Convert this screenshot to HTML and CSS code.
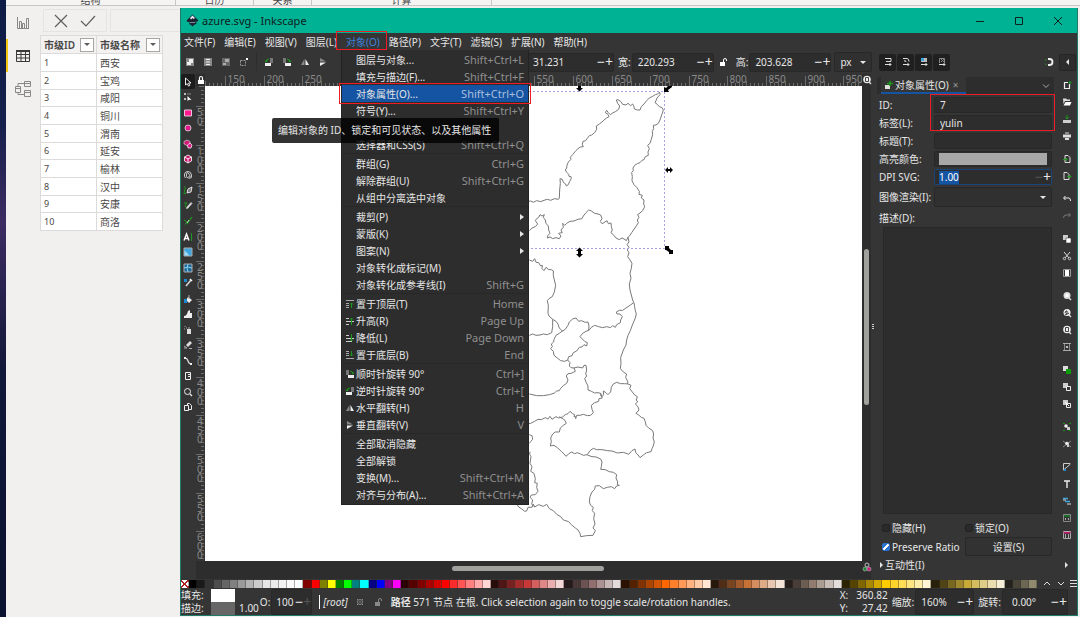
FILE: index.html
```html
<!DOCTYPE html>
<html lang="zh-CN">
<head>
    <meta charset="UTF-8">
    <meta name="viewport" content="width=device-width, initial-scale=1.0">
    <title>azure.svg - Inkscape</title>
    <link rel="stylesheet" href="styles.css">
</head>
<body>
    <!-- icon set -->
    <svg class="icon-set" aria-hidden="true">
        <symbol id="i-layers" viewBox="0 0 10 10"><path d="M1 1h8v8H1z" fill="#888"/><path d="M4 2h4v4H4zM2 5h4v3H2z" fill="#eee"/></symbol>
        <symbol id="i-list" viewBox="0 0 10 10"><path d="M1 1h8v8H1z" fill="#888"/><path d="M3 2.500h4M3 5h4M3 7.500h4" stroke="#eee"/></symbol>
        <symbol id="i-desel" viewBox="0 0 10 10"><path d="M1 1h8v8H1z" fill="#666"/><path d="M4 2h4v3H4zM2 6h3v2H2z" fill="#aaa"/></symbol>
        <symbol id="i-touch" viewBox="0 0 10 10"><path d="M1.500 3.500h5v5h-5z" fill="none" stroke="#999" stroke-dasharray="2 1"/><path d="M7 1h2v2H7z" fill="#fff"/></symbol>
        <symbol id="i-ccw" viewBox="0 0 10 10"><path d="M6 1h3v5H6z" fill="#777"/><path d="M1 6h6v3H1z" fill="#eee"/><path d="M5 2Q2 2 2 5M1 3.500l1 1.500 1.500-1" fill="none" stroke="#1a9a1a"/></symbol>
        <symbol id="i-cw" viewBox="0 0 10 10"><path d="M1 1h3v5H1z" fill="#777"/><path d="M3 6h6v3H3z" fill="#eee"/><path d="M5 2Q8 2 8 5M6.500 4L8 5l1-1.500" fill="none" stroke="#1a9a1a"/></symbol>
        <symbol id="i-fliph" viewBox="0 0 10 10"><path d="M4.500 2v6H1z" fill="#888"/><path d="M5.500 2v6H9z" fill="#eee"/></symbol>
        <symbol id="i-flipv" viewBox="0 0 10 10"><path d="M2 4.500h6L2 1z" fill="#888"/><path d="M2 5.500h6L2 9z" fill="#eee"/></symbol>
        <symbol id="i-top" viewBox="0 0 10 10"><path d="M1 1.500h8M1 4.500h3M1 6.500h3M1 8.500h3" stroke="#aaa"/><path d="M6.500 9V4M5 5.500L6.500 4 8 5.500" stroke="#1a9a1a" fill="none"/></symbol>
        <symbol id="i-raise" viewBox="0 0 10 10"><path d="M1 2.500h3M1 5.500h8M1 8.500h3" stroke="#ccc"/><path d="M6.500 9V2M5 3.500L6.500 2 8 3.500" stroke="#1a9a1a" fill="none"/></symbol>
        <symbol id="i-lower" viewBox="0 0 10 10"><path d="M1 2.500h3M1 5.500h8M1 8.500h6" stroke="#ccc"/><path d="M6.500 1v7M5 6.500L6.500 8 8 6.500" stroke="#1a9a1a" fill="none"/></symbol>
        <symbol id="i-bottom" viewBox="0 0 10 10"><path d="M1 8.500h8M1 1.500h3M1 3.500h3M1 5.500h3" stroke="#aaa"/><path d="M6.500 1v5M5 4.500L6.500 6 8 4.500" stroke="#1a9a1a" fill="none"/></symbol>
        <symbol id="i-lock" viewBox="0 0 10 10"><path d="M2 5h6v4H2z" fill="#fff"/><path d="M3.500 5V3a1.500 1.500 0 0 1 3 0v2" fill="none" stroke="#fff" stroke-width="1.200"/></symbol>
        <symbol id="i-unlock" viewBox="0 0 10 10"><path d="M2 5h5v4H2z" fill="currentColor"/><path d="M5.500 5V3a1.500 1.500 0 0 1 3 0v1" fill="none" stroke="currentColor"/></symbol>
        <symbol id="i-select" viewBox="0 0 10 10"><path d="M2.500 1l5.500 5H5.500l1.300 2.500-1.300.6L4.200 6.600 2.500 8z" fill="#111" stroke="#fff" stroke-width=".9"/></symbol>
        <symbol id="i-node" viewBox="0 0 10 10"><path d="M1 1h2v2H1zM1 6h2v2H1z" fill="#bbb"/><path d="M4 2h4" stroke="#888"/><path d="M4.500 4l4 4-2.500-.2L4.500 9z" fill="#fff"/></symbol>
        <symbol id="i-rect" viewBox="0 0 10 10"><path d="M1.500 2h7v6h-7z" fill="#ff1890" stroke="#e8c8d8"/></symbol>
        <symbol id="i-ellipse" viewBox="0 0 10 10"><circle cx="5" cy="5" r="3" fill="#e0188a" stroke="#d8b8c8"/></symbol>
        <symbol id="i-star" viewBox="0 0 10 10"><path d="M4 1l3 1.500V5L4 6.500 1 5V2.500z" fill="#d01878" stroke="#ccc" stroke-width=".7"/><path d="M7 4l2 2-1 3H5L4.500 6z" fill="#e0188a" stroke="#fff" stroke-width=".7"/></symbol>
        <symbol id="i-cube" viewBox="0 0 10 10"><path d="M5 1l3.500 2v4L5 9 1.500 7V3z" fill="#c8186e" stroke="#eee" stroke-width=".9"/><path d="M1.500 3L5 5l3.500-2M5 5v4" stroke="#fff" fill="none" stroke-width=".9"/></symbol>
        <symbol id="i-spiral" viewBox="0 0 10 10"><path d="M2.500 8Q1 6.500 1.500 4T5 1.500 8.500 5 7 8.200 4 7.500 3.600 4 6.300 4.500 5.500 6.500" fill="none" stroke="#ddd" stroke-width=".9"/></symbol>
        <symbol id="i-pen" viewBox="0 0 10 10"><path d="M1 1.500q2 0 1 3t-1 4h2" fill="none" stroke="#1a9a1a"/><path d="M9 2L5 4 4 8l4-1z" fill="#777" stroke="#eee" stroke-width=".9"/></symbol>
        <symbol id="i-pencil" viewBox="0 0 10 10"><path d="M1 2h3L2 5l3 3" fill="none" stroke="#1a9a1a"/><path d="M9 2.500L5 7l-1.500.5.500-1.500L8 1.500z" fill="#ddd" stroke="#ddd" stroke-width=".6"/></symbol>
        <symbol id="i-brush" viewBox="0 0 10 10"><path d="M1 4l3 2-2 2.500" fill="none" stroke="#1a9a1a"/><path d="M9 1L4 8" stroke="#1aa01a" stroke-width="1.200"/><path d="M6 4L4 7" stroke="#ccc"/></symbol>
        <symbol id="i-text" viewBox="0 0 10 10"><path d="M1 8.500L3.500 2l2.500 6.500M2 6.500h3" fill="none" stroke="#fff" stroke-width="1.400"/><path d="M8.500 1v8" stroke="#1a9a1a"/></symbol>
        <symbol id="i-gradient" viewBox="0 0 10 10"><path d="M1 1h8v8H1z" fill="#3fa7e0" stroke="#aaa"/><path d="M1.500 8.500v-5l5 5z" fill="#a8dcf8"/></symbol>
        <symbol id="i-mesh" viewBox="0 0 10 10"><path d="M1 1h8v8H1z" fill="#1c6a9a" stroke="#aaa"/><path d="M5 1q-2 4 0 8M1 5q4-2 8 0" stroke="#8fd0f0" fill="none"/></symbol>
        <symbol id="i-dropper" viewBox="0 0 10 10"><path d="M3 8l5-6" stroke="#ccc" stroke-width="1.800"/><path d="M1 1h3v3H1z" fill="#1c8ad0"/><path d="M7 1l2 2" stroke="#fff" stroke-width="1.500"/></symbol>
        <symbol id="i-bucket" viewBox="0 0 10 10"><path d="M5 3l4 3-3 3-3-3z" fill="#eee"/><path d="M1 5h3v4H1z" fill="#1c8ad0"/><path d="M6 1v4" stroke="#aaa"/></symbol>
        <symbol id="i-tweak" viewBox="0 0 10 10"><path d="M1 9V7q3 0 4-5l2-1v3h2v5z" fill="#eee"/></symbol>
        <symbol id="i-spray" viewBox="0 0 10 10"><path d="M4 4h4v5H4z" fill="#ddd"/><path d="M5 3h2M1.500 1.500h1M3 3h1M1 4h1" stroke="#aaa"/></symbol>
        <symbol id="i-eraser" viewBox="0 0 10 10"><path d="M7 1l2 2-4 4-2-2z" fill="#ddd"/><path d="M1 6l3 2H1M6 8.500h3" stroke="#aaa" fill="none"/></symbol>
        <symbol id="i-connector" viewBox="0 0 10 10"><path d="M2 2l2 1 2 4 2 1" stroke="#ddd" fill="none" stroke-width="1.300"/><path d="M1 1h2v2H1zM7 7h2v2H7z" fill="#eee"/></symbol>
        <symbol id="i-measure" viewBox="0 0 10 10"><path d="M2.500 1.500h5v7h-5z" fill="none" stroke="#eee"/><path d="M5 3.500h2M5 5.500h2" stroke="#eee"/></symbol>
        <symbol id="i-zoom" viewBox="0 0 10 10"><circle cx="4.500" cy="4.500" r="3" fill="none" stroke="#eee"/><path d="M7 7l2 2" stroke="#eee" stroke-width="1.300"/></symbol>
        <symbol id="i-pages" viewBox="0 0 10 10"><path d="M1.500 3.500h4v5h-4zM4.500 3V1.500h2l2 2v4H6" fill="none" stroke="#eee"/></symbol>
        <symbol id="i-new" viewBox="0 0 10 10"><path d="M6 2.500H2.500v6h5V4" fill="none" stroke="#eee" stroke-width="1.200"/><path d="M8 1v3M6.500 2.500h3" stroke="#1a9a1a"/></symbol>
        <symbol id="i-open" viewBox="0 0 10 10"><path d="M1 1.500h3l1 1h3V4H3L1.500 7z" fill="#ddd"/><path d="M3.500 5H9.500L8 8.500H1.500z" fill="#fff"/></symbol>
        <symbol id="i-save" viewBox="0 0 10 10"><path d="M1 6h8v3H1z" fill="#ccc"/><path d="M5 1v4M3.500 3.500L5 5l1.500-1.500" stroke="#1a9a1a" fill="none"/></symbol>
        <symbol id="i-print" viewBox="0 0 10 10"><path d="M3 1.500h4v1H3zM1 3.500h8v3H1zM3 7h4v2H3z" fill="#ddd"/></symbol>
        <symbol id="i-import" viewBox="0 0 10 10"><path d="M3 1.500h3l2 2v5H3z" fill="none" stroke="#ddd"/><path d="M1 5.500h4M4 4l1.500 1.500L4 7" stroke="#1a9a1a" fill="none"/></symbol>
        <symbol id="i-export" viewBox="0 0 10 10"><path d="M2 1.500h3l2 2v5H2z" fill="none" stroke="#ddd"/><path d="M5 5.500h4M7.500 4L9 5.500 7.500 7" stroke="#1a9a1a" fill="none"/></symbol>
        <symbol id="i-undo" viewBox="0 0 10 10"><path d="M3.500 2L1.500 4l2 2M2 4h5q1.500 0 1.500 3" fill="none" stroke="#eee"/></symbol>
        <symbol id="i-redo" viewBox="0 0 10 10"><path d="M6.500 2l2 2-2 2M8 4H4Q1.500 4 1.500 7" fill="none" stroke="#777"/></symbol>
        <symbol id="i-copy" viewBox="0 0 10 10"><path d="M1 1h5v5H1z" fill="#ccc"/><path d="M4 4h5v5H4z" fill="#fff" stroke="#353535" stroke-width=".6"/></symbol>
        <symbol id="i-cut" viewBox="0 0 10 10"><path d="M2 1l5 6M8 1L3 7" stroke="#ddd"/><circle cx="2.500" cy="7.500" r="1.200" fill="none" stroke="#ccc"/><circle cx="7.500" cy="7.500" r="1.200" fill="none" stroke="#ccc"/></symbol>
        <symbol id="i-paste" viewBox="0 0 10 10"><path d="M1.500 1.500h7v7h-7z" fill="none" stroke="#999"/><path d="M3 2h4v6H3z" fill="#fff"/></symbol>
        <symbol id="i-zsel" viewBox="0 0 10 10"><circle cx="5" cy="4.500" r="3.500" fill="#ddd"/><path d="M3.500 3h3v3h-3z" fill="#fff"/><path d="M7 7l2 2" stroke="#ddd" stroke-width="1.500"/></symbol>
        <symbol id="i-zdraw" viewBox="0 0 10 10"><circle cx="5" cy="4.500" r="3.500" fill="#eee"/><path d="M3 5q1-3 2-2t-1 3 3-1" stroke="#333" fill="none"/><path d="M7 7l2 2" stroke="#ddd" stroke-width="1.500"/></symbol>
        <symbol id="i-zpage" viewBox="0 0 10 10"><circle cx="5" cy="4.500" r="3.800" fill="#eee"/><path d="M3.500 2.500h3v4h-3z" fill="none" stroke="#444"/><path d="M7 7l2 2" stroke="#ddd" stroke-width="1.500"/></symbol>
        <symbol id="i-zcenter" viewBox="0 0 10 10"><path d="M1 1.500h8M1 8.500h8" stroke="#aaa"/><path d="M2.500 2v6M7.500 2v6" stroke="#888"/><path d="M5 4v2M4 5h2" stroke="#eee"/></symbol>
        <symbol id="i-dup" viewBox="0 0 10 10"><path d="M1 1h5v5H1z" fill="#ddd"/><path d="M4 4h5v5H4z" fill="#0a9a0a"/></symbol>
        <symbol id="i-clone" viewBox="0 0 10 10"><path d="M1 1h5v5H1z" fill="#ccc"/><path d="M4.500 4.500h4v4h-4z" fill="#333" stroke="#eee"/></symbol>
        <symbol id="i-unclone" viewBox="0 0 10 10"><path d="M1 1h5v5H1z" fill="#ccc"/><path d="M4.500 4.500h4v4h-4z" fill="#333" stroke="#eee"/><path d="M3 3l4 4" stroke="#fff"/></symbol>
        <symbol id="i-group" viewBox="0 0 10 10"><path d="M1 1h2v1H1zM7 1h2v1H7zM1 8h2v1H1zM7 8h2v1H7z" fill="#0a9a0a"/><circle cx="4" cy="4" r="1.800" fill="#eee"/><path d="M5 5h3v3H5z" fill="#ccc"/></symbol>
        <symbol id="i-ungroup" viewBox="0 0 10 10"><path d="M1 2l8 6M9 2L1 8" stroke="#888"/><circle cx="5" cy="4.500" r="1.800" fill="#eee"/><path d="M5 5h2v3H5z" fill="#ccc"/></symbol>
        <symbol id="i-fill" viewBox="0 0 10 10"><path d="M8 1.500H1.500V8L8.500 2" fill="none" stroke="#ccc"/><path d="M2 7h2v2H2z" fill="#1c8ad0"/></symbol>
        <symbol id="i-font" viewBox="0 0 10 10"><path d="M2 2h6M5 2v7" stroke="#eee" stroke-width="1.400"/></symbol>
        <symbol id="i-align" viewBox="0 0 10 10"><path d="M1 2.500h5M3 5.500h5" stroke="#3fa7e0" stroke-width="1.600"/><path d="M5 8h4M1 4h3" stroke="#ddd"/></symbol>
        <symbol id="i-xml" viewBox="0 0 10 10"><path d="M1.500 1.500h7v7h-7z" fill="none" stroke="#888"/><path d="M2 2h6v2H2z" fill="#1a6a2a"/><path d="M4 5L3 6l1 1M6 5l1 1-1 1" fill="none" stroke="#ccc" stroke-width=".8"/></symbol>
        <symbol id="i-selcss" viewBox="0 0 10 10"><path d="M1.500 1.500h7v7h-7zM3.500 4v4M6.500 4v4" fill="none" stroke="#aaa"/><path d="M1.500 2h7v1.500h-7z" fill="#c8186e"/></symbol>
        <symbol id="i-scale1" viewBox="0 0 10 10"><path d="M2 1.500h6v3H3M2 7.500h6M6.500 6L8 7.500 6.500 9" fill="none" stroke="#ddd"/></symbol>
        <symbol id="i-scale2" viewBox="0 0 10 10"><path d="M2 1.500h4q2 0 2 3M3 4q2-1 2 1M2 7.500h6M6.500 6L8 7.500 6.500 9" fill="none" stroke="#ddd"/></symbol>
        <symbol id="i-scale3" viewBox="0 0 10 10"><path d="M2 1h6v4H2z" fill="#bbb"/><path d="M2 1h3v3H2z" fill="#3fa7e0"/><path d="M2 7.500h6M6.500 6L8 7.500 6.500 9" fill="none" stroke="#ddd"/></symbol>
        <symbol id="i-scale4" viewBox="0 0 10 10"><path d="M2.500 6V1.500h5V6M4 2l3 3M7 2L4 5" fill="none" stroke="#888"/><path d="M2 7.500h6M6.500 6L8 7.500 6.500 9" fill="none" stroke="#ddd"/></symbol>
        <symbol id="i-snap" viewBox="0 0 10 10"><path d="M4 2h1.500a3 3 0 0 1 0 6H4" fill="none" stroke="#eee" stroke-width="1.800"/><path d="M2.500 2L1 3.500M1 6.500L2.500 8" fill="none" stroke="#1a9a1a"/></symbol>
        <symbol id="i-eye" viewBox="0 0 10 10"><circle cx="5" cy="5" r="2.500" fill="none" stroke="#888"/><path d="M5 4v2M2 2l1 1M8 2L7 3M2 8l1-1M8 8L7 7" stroke="#888"/></symbol>
        <symbol id="i-props" viewBox="0 0 10 10"><path d="M1 5h5v4H1z" fill="#ddd"/><path d="M6 1v5M3 3.500h6" stroke="#1a9a1a" stroke-width="1.600"/></symbol>
        <symbol id="i-cms" viewBox="0 0 10 10"><circle cx="5" cy="3" r="2" fill="none" stroke="#bbb"/><circle cx="3" cy="7" r="2" fill="#1a8a3a" stroke="#bbb" stroke-width=".6"/><circle cx="7" cy="7" r="2" fill="#d0187a" stroke="#bbb" stroke-width=".6"/></symbol>
    </svg>

    <!-- Power BI window behind -->
    <div class="desktop-edge"></div>
    <div class="powerbi">
        <div class="ribbon">
            <span class="ribbon-group g1">结构</span>
            <span class="ribbon-group g2">日历</span>
            <span class="ribbon-group g3">关系</span>
            <span class="ribbon-group g4">计算</span>
        </div>
        <div class="bi-body">
            <nav class="rail">
                <button aria-label="报表"><svg width="14" height="14" viewBox="0 0 14 14" fill="none" stroke="#8a8886"><path d="M1.500 1v11.500H13M3.500 5.500h2v7h-2zM6.500 7.500h2v5h-2zM10.500 2.500h2v10h-2z"/></svg></button>
                <button class="current" aria-label="数据"><svg width="14" height="14" viewBox="0 0 14 14" fill="none" stroke="#3b3a39"><path d="M.500 1.500h13v11H.500zM.500 5.500h13M.500 9h13M5 2v10M9.500 2v10"/><path d="M0 2h14" stroke-width="2"/></svg></button>
                <button aria-label="模型"><svg width="16" height="16" viewBox="0 0 16 16" fill="none" stroke="#8a8886"><path d="M.500 5.500h5v6h-5zM.500 7.500h5M9.500.500h6v5h-6zM9.500 2.500h6M9.500 9.500h6v6h-6zM9.500 11.500h6M3 5V2.500h6M3 12v1.500h6"/></svg></button>
            </nav>
            <div class="data-view">
                <div class="formula">
                    <div class="formula-actions">
                        <svg width="14" height="14" viewBox="0 0 14 14" fill="none" stroke="#605e5c" stroke-width="1.200"><path d="M1 1l12 12M13 1L1 13"/></svg>
                        <svg width="16" height="14" viewBox="0 0 16 14" fill="none" stroke="#605e5c" stroke-width="1.200"><path d="M1 7l5 5L15 2"/></svg>
                    </div>
                    <div class="formula-input"></div>
                </div>
                <table class="cities">
                    <thead>
                        <tr>
                            <th>市级ID<button aria-label="筛选"></button></th>
                            <th>市级名称<button aria-label="筛选"></button></th>
                        </tr>
                    </thead>
                    <tbody>
                        <tr><td>1</td><td>西安</td></tr>
                        <tr><td>2</td><td>宝鸡</td></tr>
                        <tr><td>3</td><td>咸阳</td></tr>
                        <tr><td>4</td><td>铜川</td></tr>
                        <tr><td>5</td><td>渭南</td></tr>
                        <tr><td>6</td><td>延安</td></tr>
                        <tr><td>7</td><td>榆林</td></tr>
                        <tr><td>8</td><td>汉中</td></tr>
                        <tr><td>9</td><td>安康</td></tr>
                        <tr><td>10</td><td>商洛</td></tr>
                    </tbody>
                </table>
            </div>
        </div>
    </div>

    <!-- Inkscape window -->
    <div class="inkscape">
        <header class="titlebar">
            <svg class="logo" width="13" height="13" viewBox="0 0 13 13"><path d="M6.500.500L12 6q1 1-1 1.500L9 8l2 1-2 1.500-1 .5-1.500 1.500L5 11l-2-1 1-1.500-3-1Q0 7 1 6z" fill="#1c2230"/><path d="M6.500 1.500L9 4 7.500 5 6.500 4 5 5.500 4 4z" fill="#e8eef4"/><path d="M4 8.500h5" stroke="#7d8ba0"/></svg>
            <span class="title">azure.svg - Inkscape</span>
            <div class="window-buttons">
                <button aria-label="最小化"><svg width="8" height="8" viewBox="0 0 8 8"><path d="M0 4.500h8"/></svg></button>
                <button aria-label="最大化"><svg width="8" height="8" viewBox="0 0 8 8"><path d="M.500.500h7v7h-7z"/></svg></button>
                <button aria-label="关闭"><svg width="8" height="8" viewBox="0 0 8 8"><path d="M0 0l8 8M8 0L0 8"/></svg></button>
            </div>
        </header>

        <nav class="menubar">
            <button>文件(F)</button>
            <button>编辑(E)</button>
            <button>视图(V)</button>
            <button>图层(L)</button>
            <div class="open-menu">
                <button class="active">对象(O)</button>
                <ul class="menu">
                    <li><button>图层与对象...<kbd>Shift+Ctrl+L</kbd></button></li>
                    <li><button>填充与描边(F)...<kbd>Shift+Ctrl+F</kbd></button></li>
                    <li class="selected"><button>对象属性(O)...<kbd>Shift+Ctrl+O</kbd></button></li>
                    <li><button>符号(Y)...<kbd>Shift+Ctrl+Y</kbd></button></li>
                    <li><button></button></li>
                    <li><button>选择器和CSS(S)<kbd>Shift+Ctrl+Q</kbd></button></li>
                    <li class="group"><button>群组(G)<kbd>Ctrl+G</kbd></button></li>
                    <li><button>解除群组(U)<kbd>Shift+Ctrl+G</kbd></button></li>
                    <li><button>从组中分离选中对象</button></li>
                    <li class="group submenu"><button>裁剪(P)</button></li>
                    <li class="submenu"><button>蒙版(K)</button></li>
                    <li class="submenu"><button>图案(N)</button></li>
                    <li><button>对象转化成标记(M)</button></li>
                    <li><button>对象转化成参考线(I)<kbd>Shift+G</kbd></button></li>
                    <li class="group"><svg class="icon"><use href="#i-top"/></svg><button>置于顶层(T)<kbd>Home</kbd></button></li>
                    <li><svg class="icon"><use href="#i-raise"/></svg><button>升高(R)<kbd>Page Up</kbd></button></li>
                    <li><svg class="icon"><use href="#i-lower"/></svg><button>降低(L)<kbd>Page Down</kbd></button></li>
                    <li><svg class="icon"><use href="#i-bottom"/></svg><button>置于底层(B)<kbd>End</kbd></button></li>
                    <li class="group"><svg class="icon"><use href="#i-cw"/></svg><button>顺时针旋转 90°<kbd>Ctrl+]</kbd></button></li>
                    <li><svg class="icon"><use href="#i-ccw"/></svg><button>逆时针旋转 90°<kbd>Ctrl+[</kbd></button></li>
                    <li><svg class="icon"><use href="#i-fliph"/></svg><button>水平翻转(H)<kbd>H</kbd></button></li>
                    <li><svg class="icon"><use href="#i-flipv"/></svg><button>垂直翻转(V)<kbd>V</kbd></button></li>
                    <li class="group"><button>全部取消隐藏</button></li>
                    <li><button>全部解锁</button></li>
                    <li><button>变换(M)...<kbd>Shift+Ctrl+M</kbd></button></li>
                    <li><button>对齐与分布(A)...<kbd>Shift+Ctrl+A</kbd></button></li>
                </ul>
                <div class="tooltip" role="tooltip">编辑对象的 ID、锁定和可见状态、以及其他属性</div>
            </div>
            <button>路径(P)</button>
            <button>文字(T)</button>
            <button>滤镜(S)</button>
            <button>扩展(N)</button>
            <button>帮助(H)</button>
        </nav>

        <div class="toolbar">
            <div class="select-actions">
                <button aria-label="全选"><svg class="icon"><use href="#i-layers"/></svg></button>
                <button aria-label="所有图层"><svg class="icon"><use href="#i-list"/></svg></button>
                <button aria-label="取消选择"><svg class="icon"><use href="#i-desel"/></svg></button>
                <button aria-label="触碰选择"><svg class="icon"><use href="#i-touch"/></svg></button>
                <i class="divider"></i>
                <button aria-label="逆时针"><svg class="icon"><use href="#i-ccw"/></svg></button>
                <button aria-label="顺时针"><svg class="icon"><use href="#i-cw"/></svg></button>
                <button aria-label="水平翻转"><svg class="icon"><use href="#i-fliph"/></svg></button>
                <button aria-label="垂直翻转"><svg class="icon"><use href="#i-flipv"/></svg></button>
            </div>
            <div class="spin first"><input type="text" value="31.231" aria-label="Y"><button>−</button><button>+</button></div>
            <label for="w">宽:</label>
            <div class="spin"><input type="text" id="w" value="220.293"><button>−</button><button>+</button></div>
            <button class="ratio" aria-label="锁定比例"><svg class="icon"><use href="#i-unlock"/></svg></button>
            <label for="h">高:</label>
            <div class="spin"><input type="text" id="h" value="203.628"><button>−</button><button>+</button></div>
            <div class="select unit"><select aria-label="单位"><option>px</option></select></div>
            <div class="toggles">
                <button aria-label="缩放描边"><svg class="icon"><use href="#i-scale1"/></svg></button>
                <button aria-label="缩放圆角"><svg class="icon"><use href="#i-scale2"/></svg></button>
                <button aria-label="移动渐变"><svg class="icon"><use href="#i-scale3"/></svg></button>
                <button aria-label="移动图案"><svg class="icon"><use href="#i-scale4"/></svg></button>
            </div>
            <button class="snap" aria-label="吸附"><svg class="icon"><use href="#i-snap"/></svg></button>
            <button class="snap-menu" aria-label="吸附选项"></button>
        </div>

        <div class="workspace">
            <div class="toolbox">
                <button class="current" aria-label="选择"><svg class="icon"><use href="#i-select"/></svg></button>
                <button aria-label="节点"><svg class="icon"><use href="#i-node"/></svg></button>
                <button aria-label="矩形"><svg class="icon"><use href="#i-rect"/></svg></button>
                <button aria-label="圆形"><svg class="icon"><use href="#i-ellipse"/></svg></button>
                <button aria-label="星形"><svg class="icon"><use href="#i-star"/></svg></button>
                <button aria-label="3D盒"><svg class="icon"><use href="#i-cube"/></svg></button>
                <button aria-label="螺旋"><svg class="icon"><use href="#i-spiral"/></svg></button>
                <button aria-label="钢笔"><svg class="icon"><use href="#i-pen"/></svg></button>
                <button aria-label="铅笔"><svg class="icon"><use href="#i-pencil"/></svg></button>
                <button aria-label="书法"><svg class="icon"><use href="#i-brush"/></svg></button>
                <button aria-label="文本"><svg class="icon"><use href="#i-text"/></svg></button>
                <button aria-label="渐变"><svg class="icon"><use href="#i-gradient"/></svg></button>
                <button aria-label="网格"><svg class="icon"><use href="#i-mesh"/></svg></button>
                <button aria-label="取色"><svg class="icon"><use href="#i-dropper"/></svg></button>
                <button aria-label="油漆桶"><svg class="icon"><use href="#i-bucket"/></svg></button>
                <button aria-label="微调"><svg class="icon"><use href="#i-tweak"/></svg></button>
                <button aria-label="喷绘"><svg class="icon"><use href="#i-spray"/></svg></button>
                <button aria-label="橡皮"><svg class="icon"><use href="#i-eraser"/></svg></button>
                <button aria-label="连接器"><svg class="icon"><use href="#i-connector"/></svg></button>
                <button aria-label="测量"><svg class="icon"><use href="#i-measure"/></svg></button>
                <button aria-label="缩放"><svg class="icon"><use href="#i-zoom"/></svg></button>
                <button aria-label="页面"><svg class="icon"><use href="#i-pages"/></svg></button>
            </div>

            <div class="canvas-area">
                <button class="corner" aria-label="锁定参考线"><svg class="icon"><use href="#i-lock"/></svg></button>
                <svg class="ruler" id="ruler-x"></svg>
                <button class="corner" aria-label="缩放到页面"><svg class="icon"><use href="#i-zpage"/></svg></button>
                <svg class="ruler" id="ruler-y"></svg>
                <div class="canvas">
                    <svg width="520" height="475" viewBox="0 0 520 475">
                        <!-- northern borders -->
                        <g class="border" transform="translate(295 -6) scale(.3333)">
                            <path d="M80 365L92 363 100 367 110 362 122 365 132 361 142 358 152 361 164 356 174 358 178 355 179 330 181 310 180 296 187 298 190 307 197 312 199 318 205 314 209 304 214 296 213 290 207 289 206 283 200 277 196 270 200 264 201 256 205 246 213 238 211 232 218 224 226 214 234 206 241 201 250 200 247 194 249 184 257 182 262 175 268 167 275 165 284 158 290 148 289 138 298 132 306 126 312 120 320 114 327 110 324 103 316 98 320 91 325 98 331 104 338 99 346 95 356 88 359 78 353 70 349 60 354 59 362 64 368 73 378 75 384 70 392 77 398 72 402 80 403 87 412 90 420 90 424 80 432 72 440 62 448 54 458 49 466 44 473 42 479 36 480 44 471 54 468 62 465 68 472 73 478 80 486 83 490 90 487 100 484 108 480 120 475 130 468 135 460 136 461 146 457 154 458 164 454 178 450 190 443 196 448 206 444 216 445 226 436 230 432 239 426 241 420 248 412 251 404 256 399 264 400 272 395 278 397 290 396 302 402 314 410 322 414 328 418 334 417 343 427 346 424 354 432 360 431 372 434 380 428 392 420 399 413 404 417 412 412 420 415 428 409 438 402 448 395 458 390 466 384 472"/>
                            <path d="M384 472L379 482 372 477 366 474 358 479 348 474 340 464 333 458 337 450 334 440 333 429 325 431 321 422 312 428 306 431 301 424 306 416 302 405 294 402 284 400 274 393 266 390 258 398 250 408 246 416 234 418 222 423 210 424 200 430 194 436 188 430 190 442 183 450 187 458 176 460 183 468 178 476 168 473 158 476 150 471 142 474 144 466 150 460 146 450 145 438 138 430 136 420 130 412 133 404 126 408 120 404 116 412 110 416 106 422 113 432 106 440 96 444 88 452"/>
                            <path d="M384 472L387 486 381 494 387 502 382 510 387 518 383 530 390 540 396 550 394 565 390 580 393 595 388 612 390 630 394 645 398 660 401 668"/>
                            <path d="M88 540L98 544 104 536 108 547 116 548 122 558 127 556 126 566 132 572 138 562 146 569 154 569 160 573 160 586 163 600 167 616 163 636 157 650 147 656 142 662 145 676 144 700"/>
                        </g>
                        <!-- southern borders -->
                        <g class="border" transform="translate(295 214) scale(.3333)">
                            <path d="M402 8L404 20 406 32 409 42 406 54 396 78 391 92 384 106 380 120 378 135 370 150 366 162 362 172 363 190 361 206 370 216 380 222 377 232 384 246 382 252"/>
                            <path d="M401 8L390 16 378 24 368 31 358 31 349 36 351 42 360 42 367 50 362 60 361 68 350 74 346 82 338 77 332 83 320 80 308 83 296 80 284 76 274 82 268 90"/>
                            <path d="M266 92L267 78 264 66 256 67 244 62 236 64 228 54 218 57 208 66 204 76 196 88 186 94 178 100 168 106 162 118 161 126 154 132 157 140 152 146 160 154 162 166 172 174 182 182 194 184 203 180 206 170 216 167 220 158 230 153 238 142 246 141 252 134 260 138 262 128 254 124 246 116 240 110 248 100 258 94 268 90"/>
                            <path d="M144 40L147 48 158 58 158 80 155 98 142 104 130 102 120 105 108 106 98 102 88 106M158 58L168 64 174 72 178 84 188 94"/>
                            <path d="M203 180L210 188 208 198 213 203 222 204 234 201 248 204 252 196 258 196 260 210 257 222 260 228 254 236 258 246 264 258 264 270 274 274 284 279 294 278 302 280 306 290 311 284 310 273 318 278 324 284 332 276 334 262 340 252 350 247 362 251 374 251 384 252"/>
                            <path d="M222 204L226 214 214 220 204 221 199 228 204 240 200 250 190 257 182 265 178 272 170 273 162 280 148 284 130 287 110 287 88 282"/>
                            <path d="M80 372L92 370 104 364 114 358 124 359 136 353 144 357 150 349 156 358 168 350 176 354 188 351 196 344 204 341 210 334 218 341 224 344 222 350 227 350 227 356 230 346 240 346 250 343 262 347 272 346 280 338 276 328 274 316 284 308 296 304 297 296 307 294 302 286 302 280"/>
                            <path d="M384 252L393 256 389 266 397 276 404 285 412 290 409 300 413 306 406 312 414 320 417 330 408 340 416 345 424 352 432 355 436 366 438 376 446 384 458 392 461 402 459 414 463 426 459 440 456 446 453 455 440 458 430 465 420 473 412 462 407 458 405 447 396 452 386 463 370 457 352 459 336 453 322 452 306 449 290 449 280 445 270 452 262 464 250 466 242 462 232 458 224 461 214 456 206 462 198 469 192 462 184 454 172 443 162 436 151 438 154 424 152 414 158 402 166 396 178 396 181 384 190 376 199 370 194 360 186 355 178 350"/>
                            <path d="M262 465L276 470 288 471 302 477 306 486 304 500 302 508 316 509 328 515 340 517 350 524 348 534 353 546 352 554 358 556 350 558 344 566 334 560 322 562 310 566 298 557 286 558 284 568 276 576 270 590 268 606 272 616 280 622 277 632 284 640 281 656 285 672 279 684 286 692 279 706 260 707 242 710 240 700 234 690 226 684 214 674 206 665 190 660 182 650 170 643 160 632 148 626 140 613 130 619 116 614 104 621 100 612 96 622 84 622 80 633 74 634 64 626 56 621 50 612"/>
                            <path d="M88 404L96 407 98 418 92 425 88 430M90 455L89 463 93 470 90 490 96 500 92 514 102 520 106 536 104 548 112 550 110 562 114 574 106 584 94 585 90 592 98 600 95 612 100 620"/>
                        </g>
                        <!-- selection box and its handles -->
                        <path d="M200 5.500h259.500v157H200" fill="none" stroke="#a6a2e4" stroke-dasharray="2 2"/>
                        <path d="M373 0h3v2h2l-3.500 3.500L371 2h2zM371 165l3.500-3.500 3.500 3.500h-2v3h2l-3.500 3.500L371 168h2v-3zM460 84l3-3v2h2v-2l3 3-3 3v-2h-2v2zM459 6V1l2 1 3-3h3v2l-4 3 1 2zM460 160h4v2l2 2h2v4h-4v-2l-3-2h-1z"/>
                    </svg>
                </div>
                <div class="scroll-y"><i></i></div>
                <div class="scroll-x"><i></i></div>
                <button class="corner" aria-label="色彩管理"><svg class="icon"><use href="#i-cms"/></svg></button>
            </div>

            <div class="grip"></div>

            <aside class="dock">
                <div class="tabs">
                    <button class="tab"><svg class="icon"><use href="#i-props"/></svg>对象属性(O)<span>×</span></button>
                    <button class="tab-menu" aria-label="对话框列表"><svg width="8" height="8" viewBox="0 0 8 8"><path d="M1 2.500l3 3 3-3" fill="none" stroke="#aaa"/></svg></button>
                </div>
                <form class="props">
                    <div class="named">
                        <label for="oid">ID:</label><input type="text" id="oid" value="7">
                        <label for="olabel">标签(L):</label><input type="text" id="olabel" value="yulin">
                    </div>
                    <label for="otitle">标题(T):</label><input type="text" id="otitle">
                    <label for="ocolor">高亮颜色:</label><button type="button" class="color" id="ocolor"></button>
                    <label for="dpi">DPI SVG:</label>
                    <div class="spin focus"><mark><input type="text" id="dpi" value="1.00"></mark><button type="button" disabled>−</button><button type="button">+</button></div>
                    <label for="render">图像渲染(I):</label>
                    <div class="select"><select id="render"><option></option></select></div>
                    <label for="desc" class="wide">描述(D):</label>
                </form>
                <textarea id="desc"></textarea>
                <div class="checks">
                    <label><input type="checkbox">隐藏(H)</label>
                    <label><input type="checkbox">锁定(O)</label>
                    <label><input type="checkbox" checked>Preserve Ratio</label>
                    <button>设置(S)</button>
                </div>
                <button class="expander">互动性(I)</button>
            </aside>

            <div class="commands">
                <div>
                    <button aria-label="新建"><svg class="icon"><use href="#i-new"/></svg></button>
                    <button aria-label="打开"><svg class="icon"><use href="#i-open"/></svg></button>
                    <button aria-label="保存"><svg class="icon"><use href="#i-save"/></svg></button>
                    <button aria-label="打印"><svg class="icon"><use href="#i-print"/></svg></button>
                </div>
                <div>
                    <button aria-label="导入"><svg class="icon"><use href="#i-import"/></svg></button>
                    <button aria-label="导出"><svg class="icon"><use href="#i-export"/></svg></button>
                </div>
                <div>
                    <button aria-label="撤销"><svg class="icon"><use href="#i-undo"/></svg></button>
                    <button aria-label="重做"><svg class="icon"><use href="#i-redo"/></svg></button>
                </div>
                <div>
                    <button aria-label="复制"><svg class="icon"><use href="#i-copy"/></svg></button>
                    <button aria-label="剪切"><svg class="icon"><use href="#i-cut"/></svg></button>
                    <button aria-label="粘贴"><svg class="icon"><use href="#i-paste"/></svg></button>
                </div>
                <div>
                    <button aria-label="缩放选区"><svg class="icon"><use href="#i-zsel"/></svg></button>
                    <button aria-label="缩放绘图"><svg class="icon"><use href="#i-zdraw"/></svg></button>
                    <button aria-label="缩放页面"><svg class="icon"><use href="#i-zpage"/></svg></button>
                    <button aria-label="居中页面"><svg class="icon"><use href="#i-zcenter"/></svg></button>
                </div>
                <div>
                    <button aria-label="再制"><svg class="icon"><use href="#i-dup"/></svg></button>
                    <button aria-label="克隆"><svg class="icon"><use href="#i-clone"/></svg></button>
                    <button aria-label="断开克隆"><svg class="icon"><use href="#i-unclone"/></svg></button>
                </div>
                <div>
                    <button aria-label="群组"><svg class="icon"><use href="#i-group"/></svg></button>
                    <button aria-label="解除群组"><svg class="icon"><use href="#i-ungroup"/></svg></button>
                </div>
                <div>
                    <button aria-label="填充"><svg class="icon"><use href="#i-fill"/></svg></button>
                    <button aria-label="文字"><svg class="icon"><use href="#i-font"/></svg></button>
                    <button aria-label="对齐"><svg class="icon"><use href="#i-align"/></svg></button>
                    <button aria-label="XML"><svg class="icon"><use href="#i-xml"/></svg></button>
                    <button aria-label="选择器"><svg class="icon"><use href="#i-selcss"/></svg></button>
                </div>
                <button class="more" aria-label="更多"></button>
            </div>
        </div>

        <div class="palette">
            <div class="swatches" id="swatches"></div>
            <svg width="38" height="9" viewBox="0 0 38 9" fill="none" stroke="#ddd"><path d="M5 6l3-3 3 3M19 3l3 3 3-3M31 1.500h7M31 4.500h7M31 7.500h7"/></svg>
        </div>

        <footer class="statusbar">
            <div class="style-labels"><span>填充:</span><span>描边:</span></div>
            <div class="style-swatches"><i></i><i></i></div>
            <span class="stroke-width">1.00</span>
            <label for="opacity">O:</label>
            <div class="spin opacity"><input type="text" id="opacity" value="100"><button>−</button><button disabled>+</button></div>
            <button class="layer">[root]</button>
            <svg class="icon"><use href="#i-eye"/></svg>
            <svg class="icon dim"><use href="#i-unlock"/></svg>
            <p class="message"><b>路径</b> 571 节点 在根. Click selection again to toggle scale/rotation handles.</p>
            <div class="coords"><span>X:</span><b>360.82</b><span>Y:</span><b>27.42</b></div>
            <label for="zoom">缩放:</label>
            <div class="spin zoom"><input type="text" id="zoom" value="160%"><button>−</button><button>+</button></div>
            <label for="rotate">旋转:</label>
            <div class="spin rotate"><input type="text" id="rotate" value="0.00°"><button>−</button><button>+</button></div>
        </footer>
    </div>

    <script>
        // Default Inkscape palette, first entry is "none"
        const colors = ("none 000000 1a1a1a 333333 4d4d4d 666666 808080 999999 b3b3b3 cccccc e6e6e6 ececec f2f2f2 f9f9f9 ffffff " +
            "800000 ff0000 808000 ffff00 008000 00ff00 008080 00ffff 000080 0000ff 800080 ff00ff " +
            "2b0000 550000 800000 aa0000 d40000 ff0000 ff2a2a ff5555 ff8080 ffaaaa ffd5d5 " +
            "280b0b 501616 782121 a02c2c c83737 d35f5f de8787 e9afaf f4d7d7 " +
            "241c1c 483737 6c5353 916f6f ac9393 c8b7b7 e3dbdb " +
            "2b1100 552200 803300 aa4400 d45500 ff6600 ff7f2a ff9955 ffb380 ffccaa ffe6d5 " +
            "28170b 502d16 784421 a05a2c c87137 d38d5f deaa87 e9c6af f4e3d7 " +
            "241f1c 483e37 6c5d53 917c6f ac9d93 c8beb7 e3dedb " +
            "2b2200 554400 806600 aa8800 d4aa00 ffcc00 ffd42a ffdd55 ffe680 ffeeaa fff6d5 " +
            "28220b 504416 786721 a0892c c8ab37 d3bc5f decd87 e9ddaf f4eed7 " +
            "24221c 484537 6c6753 918a6f").split(" ");

        const swatches = document.getElementById("swatches");
        colors.forEach(color => {
            const button = document.createElement("button");
            button.setAttribute("aria-label", color);
            if (color === "none") {
                button.className = "none";
            } else {
                button.style.background = "#" + color;
            }
            swatches.appendChild(button);
        });

        // Rulers: a labelled tick every 50 units
        const STEP = 38.65;

        function tick(x, size, vertical) {
            return vertical ? `M${8 - size} ${x}h${size}` : `M${x} ${12 - size}v${size}`;
        }

        function drawRuler(id, first, offset, count, vertical) {
            let path = "";
            let labels = "";
            for (let i = -1; i < count; i++) {
                const start = Math.round(offset + i * STEP) + 0.5;
                path += tick(start, vertical ? 8 : 10, vertical);
                for (let j = 1; j < 10; j++) {
                    path += tick(start + Math.round(j * STEP / 10), j === 5 ? 5 : 3, vertical);
                }
                const value = String(first + i * 50);
                if (vertical && i >= 0) {
                    [...value].forEach((digit, n) => {
                        labels += `<text x="1" y="${start + 9 + n * 9}">${digit}</text>`;
                    });
                } else if (!vertical && i >= 0) {
                    labels += `<text x="${start + 2}" y="9">${value}</text>`;
                }
            }
            document.getElementById(id).innerHTML = `<path d="${path}"/>${labels}`;
        }

        drawRuler("ruler-x", 150, 20, 17, false);
        drawRuler("ruler-y", 50, 20, 12, true);
    </script>
</body>
</html>
```
FILE: styles.css
```css
* {
    box-sizing: border-box;
}

body {
    margin: 0;
    height: 100vh;
    overflow: hidden;
    display: flex;
    position: relative;
    background: #f2f0ee;
    font-family: "Noto Sans", "Noto Sans CJK SC", sans-serif;
    font-size: 10px;
    line-height: 14px;
    color: #e6e6e6;
}

button,
input,
select,
textarea {
    font: inherit;
    color: inherit;
    background: none;
    border: none;
    margin: 0;
    padding: 0;
    outline: none;
    min-width: 0;
}

button {
    display: flex;
    align-items: center;
    justify-content: center;
    white-space: nowrap;
}

label,
span {
    white-space: nowrap;
}

.icon-set {
    display: none;
}

.icon {
    width: 10px;
    height: 10px;
    flex: none;
}

/* Power BI */
.desktop-edge {
    width: 6px;
    flex: none;
    background: linear-gradient(#0d1c46, #16204c 20%, #3c2c62 36%, #121838 60%, #0a1230);
}

.powerbi {
    flex: 1;
    display: flex;
    flex-direction: column;
    color: #4a4846;
}

.ribbon {
    height: 6px;
    overflow: hidden;
    display: flex;
    border-bottom: 1px solid #c8c6c4;
    background: #f5f4f3;
    line-height: 0;
}

.ribbon-group {
    text-align: center;
    border-right: 1px solid #c8c6c4;
}

.g1 {
    width: 170px;
}

.g2 {
    width: 78px;
}

.g3 {
    width: 58px;
}

.g4 {
    width: 180px;
}

.bi-body {
    flex: 1;
    display: flex;
}

.rail {
    width: 34px;
    display: flex;
    flex-direction: column;
}

.rail button {
    height: 33px;
    padding-right: 2px;
    border-left: 2px solid transparent;
}

.rail .current {
    border-left-color: #f2c811;
}

.data-view {
    flex: 1;
}

.formula {
    display: flex;
    gap: 3px;
    height: 29px;
    padding: 3px 3px;
}

.formula-actions {
    width: 64px;
    display: flex;
    align-items: center;
    justify-content: center;
    gap: 12px;
    border: 1px solid #e6e4e2;
}

.formula-input {
    flex: 1;
    border: 1px solid #e6e4e2;
}

.cities {
    width: 123px;
    border-collapse: collapse;
    table-layout: fixed;
    background: #fff;
}

.cities th,
.cities td {
    height: 18px;
    padding: 0 3px;
    border: 1px solid #dddbd9;
    text-align: left;
    line-height: 14px;
}

.cities tr:nth-child(3n) td {
    height: 17px;
}

.cities td:first-child {
    font-size: 9px;
}

.cities th {
    background: #f3f2f1;
    font-weight: 600;
    white-space: nowrap;
}

.cities th:first-child {
    width: 56px;
}

.cities th button {
    float: right;
    width: 14px;
    height: 14px;
    margin-right: -1px;
    border: 1px solid #a8a6a4;
    background: #fff;
}

.cities th button::after {
    content: "";
    border: 3px solid transparent;
    border-top-color: #605e5c;
    border-bottom: none;
}

/* Inkscape window */
.inkscape {
    position: absolute;
    top: 8px;
    right: 2px;
    bottom: 1px;
    left: 180px;
    display: flex;
    flex-direction: column;
    background: #353535;
    border: 1px solid #1f7a68;
    border-top: none;
}

.titlebar {
    height: 25px;
    display: flex;
    align-items: center;
    gap: 3px;
    padding-left: 5px;
    background: #00b294;
    color: #10201c;
}

.title {
    flex: 1;
    font-size: 11px;
}

.window-buttons {
    display: flex;
}

.window-buttons button {
    width: 39px;
    height: 25px;
}

.window-buttons path {
    fill: none;
    stroke: #10201c;
}

.menubar {
    height: 17px;
    display: flex;
    gap: 9px;
    padding: 0 3px;
}

.open-menu {
    position: relative;
    display: flex;
}

.menubar .active {
    position: relative;
    color: #3d84dc;
}

.menubar .active::after {
    content: "";
    position: absolute;
    inset: -2px -7px 0 -10px;
    border: 1px solid #ee1c25;
    z-index: 3;
}

.menu {
    position: absolute;
    z-index: 2;
    top: 17px;
    left: -5px;
    width: 188px;
    margin: 0;
    padding: 1px 0;
    list-style: none;
    background: #2d2d2d;
    border: 1px solid #232323;
    border-top: none;
}

.menu li {
    position: relative;
    height: 17px;
    display: flex;
    align-items: center;
    padding: 0 4px 0 3px;
}

.menu li.group {
    height: 19px;
    border-top: 1px solid #282828;
    padding-top: 1px;
}

.menu li button {
    flex: 1;
    justify-content: space-between;
    margin-left: 11px;
}

.menu .icon + button {
    margin-left: 1px;
}

.menu kbd {
    font: inherit;
    font-size: 11px;
    color: #8f8f8f;
}

.menu .selected {
    background: #1554a2;
}

.menu .selected kbd {
    color: #a9bfdc;
}

.menu .selected::after {
    content: "";
    position: absolute;
    inset: -2px -3px;
    border: 1px solid #ee1c25;
}

.submenu::after {
    content: "";
    border: 3px solid transparent;
    border-left: 4px solid #e6e6e6;
    border-right: none;
}

.tooltip {
    position: absolute;
    z-index: 3;
    top: 85px;
    left: -74px;
    padding: 5px 8px 5px 6px;
    border-radius: 2px;
    background: rgba(0, 0, 0, 0.8);
    white-space: nowrap;
    line-height: 15px;
}

/* Tool controls */
.toolbar {
    height: 24px;
    display: flex;
    align-items: center;
}

.select-actions {
    width: 346px;
    display: flex;
    align-items: center;
}

.select-actions button {
    width: 18px;
    height: 18px;
}

.divider {
    width: 1px;
    height: 18px;
    margin: 0 3px;
    background: #2d2d2d;
}

.spin {
    display: flex;
    align-items: center;
    width: 82px;
    height: 19px;
    padding-left: 5px;
    background: #2d2d2d;
    border: 1px solid #282828;
    border-radius: 2px;
}

.spin.first {
    width: 87px;
}

.spin input {
    flex: 1;
    width: 20px;
}

.spin button {
    width: 8px;
    font-size: 14px;
}

.spin button:disabled {
    color: #555;
}

.toolbar label {
    padding: 0 1px 0 4px;
}

.ratio {
    width: 18px;
    color: #fff;
}

.select {
    position: relative;
    display: flex;
    height: 20px;
    background: #303030;
    border: 1px solid #282828;
    border-radius: 2px;
}

.select select {
    flex: 1;
    padding-left: 5px;
    appearance: none;
}

.select::after {
    content: "";
    position: absolute;
    right: 5px;
    top: 8px;
    border: 3px solid transparent;
    border-top-color: #e6e6e6;
    border-bottom: none;
    pointer-events: none;
}

.unit {
    width: 38px;
    margin-left: 3px;
}

.toggles {
    display: flex;
    gap: 1px;
    margin-left: 7px;
}

.toggles button {
    width: 17px;
    height: 17px;
    border-radius: 2px;
    background: #202020;
}

.snap {
    width: 20px;
    margin-left: auto;
}

.snap-menu {
    width: 17px;
    height: 17px;
    margin-right: 1px;
    background: #2d2d2d;
    border: 1px solid #262626;
    border-radius: 2px;
}

.snap-menu::after {
    content: "";
    border: 3px solid transparent;
    border-right-color: #e6e6e6;
    border-left: none;
}

/* Workspace */
.workspace {
    flex: 1;
    min-height: 0;
    display: flex;
}

.toolbox {
    width: 15px;
}

.toolbox button {
    width: 14px;
    height: 15px;
}

.toolbox button:nth-child(even) {
    margin-bottom: 1px;
}

.toolbox .current {
    background: #1c1c1c;
    border-radius: 2px;
}

.canvas-area {
    flex: 1;
    min-width: 0;
    display: grid;
    grid-template-columns: 9px 1fr 9px;
    grid-template-rows: 12px 1fr 18px;
    background: #2d2d2d;
}

.corner {
    height: 12px;
}

.ruler {
    width: 100%;
    height: 100%;
    overflow: hidden;
    background: #353535;
    font-size: 10px;
}

.ruler path {
    stroke: #6c6c6c;
    fill: none;
}

.ruler text {
    fill: #8a8a8a;
}

.canvas {
    overflow: hidden;
    background: #fff;
}

.canvas svg {
    display: block;
}

.border {
    fill: none;
    stroke: #777;
    stroke-width: 3px;
    stroke-linejoin: round;
}

.scroll-y {
    padding: 163px 2px 0;
}

.scroll-y i {
    display: block;
    height: 156px;
    border-radius: 3px;
    background: #a0a09c;
}

.scroll-x {
    grid-column: 2;
    padding: 5px 0 0 247px;
}

.scroll-x i {
    display: block;
    width: 152px;
    height: 5px;
    border-radius: 3px;
    background: #a0a09c;
}

.grip {
    width: 6px;
    display: flex;
    align-items: center;
}

.grip::after {
    content: "";
    width: 2px;
    height: 6px;
    margin-left: 1px;
    background: repeating-linear-gradient(#ccc 0 1px, transparent 1px 2px);
}

.dock {
    width: 177px;
    padding: 3px 0 5px;
    display: flex;
    flex-direction: column;
}

.tabs {
    display: flex;
    justify-content: space-between;
    height: 17px;
    background: #2d2d2d;
}

.tab {
    gap: 1px;
    margin-left: 4px;
    padding: 0 7px 0 3px;
    background: #353535;
    border-bottom: 2px solid #1554a2;
}

.tab span {
    margin-left: 3px;
    color: #999;
}

.tab-menu {
    width: 16px;
}

.props {
    display: grid;
    grid-template-columns: 52px 1fr;
    gap: 2px 3px;
    align-items: center;
    padding: 3px 2px 0;
}

.named {
    position: relative;
    grid-column: span 2;
    display: grid;
    grid-template-columns: subgrid;
    row-gap: 2px;
    align-items: center;
}

.named::after {
    content: "";
    position: absolute;
    inset: -3px -3px 0 51px;
    border: 1px solid #ee1c25;
    pointer-events: none;
}

.props input[type="text"],
.color {
    height: 16px;
    width: 100%;
    padding-left: 5px;
    background: #2d2d2d;
    border: 1px solid #282828;
    border-radius: 2px;
}

.color {
    padding: 2px 4px;
}

.color::after {
    content: "";
    flex: 1;
    height: 12px;
    background: #a8a8a8;
}

.props .spin {
    width: auto;
    height: 16px;
    padding-left: 4px;
}

.props .focus {
    border-color: #1b4478;
}

.focus mark {
    display: flex;
    margin-right: auto;
    background: #1554a2;
    color: #fff;
}

.focus mark input[type="text"] {
    width: 20px;
    height: 13px;
    padding: 0;
    background: none;
    border: none;
}

.wide {
    grid-column: span 2;
    line-height: 18px;
}

#desc {
    flex: 1;
    margin: 0 2px 0 6px;
    resize: none;
    background: #2d2d2d;
    border: 1px solid #282828;
}

.checks {
    display: grid;
    grid-template-columns: 1fr 87px;
    align-items: center;
    margin: 5px 2px 0 5px;
}

.checks label {
    display: flex;
    align-items: center;
    gap: 1px;
    height: 18px;
}

.checks input {
    appearance: none;
    width: 8px;
    height: 8px;
    margin: 0 1px 0 0;
    background: #2a2a2a;
    border: 1px solid #222;
    border-radius: 2px;
}

.checks input:checked {
    border-color: #2a72d0;
    background: #2a72d0 linear-gradient(135deg, transparent 40%, #fff 40% 60%, transparent 60%);
}

.checks button {
    height: 19px;
    background: #323232;
    border: 1px solid #282828;
    border-radius: 2px;
}

.expander {
    justify-content: flex-start;
    gap: 2px;
    height: 18px;
    padding-left: 3px;
}

.expander::before,
.more::after {
    content: "";
    border: 3px solid transparent;
    border-left-color: #e6e6e6;
    border-right: none;
}

.commands {
    width: 23px;
    display: flex;
    flex-direction: column;
    align-items: flex-end;
    gap: 6px;
    padding: 2px 0 8px;
}

.commands button {
    width: 21px;
    height: 17px;
}

.commands .more {
    height: 12px;
    margin-top: auto;
}

/* Palette and status */
.palette {
    display: flex;
    align-items: center;
    gap: 1px;
    height: 9px;
}

.swatches {
    flex: 1;
    display: flex;
    height: 8px;
}

.swatches button {
    flex: 1;
    border-right: 1px solid rgba(53, 53, 53, 0.4);
}

.swatches .none {
    background:
        linear-gradient(45deg, transparent 42%, #b02020 42% 58%, transparent 58%),
        linear-gradient(135deg, #fff 42%, #b02020 42% 58%, #fff 58%);
}

.statusbar {
    height: 27px;
    display: flex;
    align-items: center;
}

.style-labels {
    width: 30px;
    display: flex;
    flex-direction: column;
    line-height: 13px;
}

.style-swatches i {
    display: block;
    width: 24px;
    height: 13px;
    background: #fff;
}

.style-swatches i + i {
    background: #666;
}

.stroke-width {
    align-self: flex-end;
    padding: 0 1px 0 4px;
}

.statusbar .spin {
    height: 26px;
}

.statusbar .opacity {
    width: 41px;
    margin-left: 1px;
    padding-left: 4px;
}

.layer {
    height: 14px;
    margin: 0 7px;
    padding-left: 3px;
    border-left: 1px solid #fff;
    font-style: italic;
}

.dim {
    margin-left: 8px;
    color: #888;
}

.message {
    flex: 1;
    min-width: 0;
    margin: 0 0 0 8px;
    white-space: nowrap;
}

.coords {
    display: grid;
    grid-template-columns: 14px 34px;
    margin-right: 4px;
    line-height: 13px;
}

.coords b {
    font-weight: normal;
    text-align: right;
}

.statusbar .zoom {
    width: 59px;
    margin: 0 4px 0 1px;
}

.statusbar .rotate {
    width: 66px;
    margin: 0 9px 0 1px;
    padding-left: 9px;
}
```
